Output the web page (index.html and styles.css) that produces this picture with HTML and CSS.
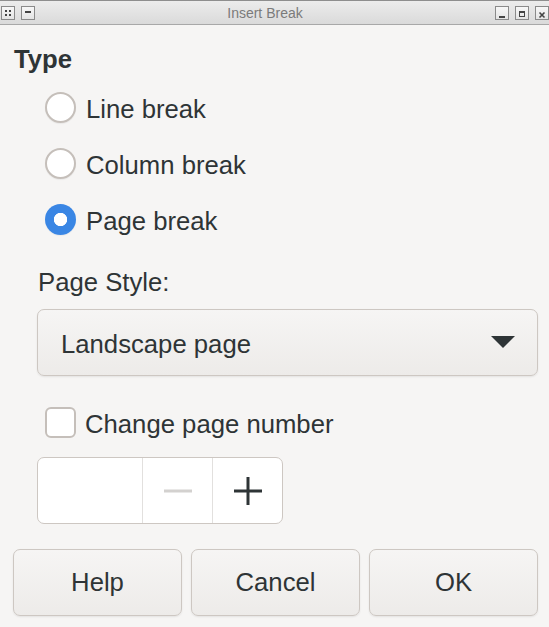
FILE: index.html
```html
<!DOCTYPE html>
<html>
<head>
<meta charset="utf-8">
<title>Insert Break</title>
<link rel="stylesheet" href="styles.css">
</head>
<body>
<div class="titlebar">
  <div class="tb-group">
    <span class="tb-btn"><svg width="12" height="12" viewBox="0 0 12 12"><rect x="3" y="3" width="2" height="2" fill="#444"/><rect x="7" y="3" width="2" height="2" fill="#444"/><rect x="3" y="7" width="2" height="2" fill="#444"/><rect x="7" y="7" width="2" height="2" fill="#444"/></svg></span>
    <span class="tb-btn"><svg width="12" height="12" viewBox="0 0 12 12"><rect x="3" y="4" width="6" height="2" fill="#444"/></svg></span>
  </div>
  <div class="title">Insert Break</div>
  <div class="tb-group">
    <span class="tb-btn"><svg width="12" height="12" viewBox="0 0 12 12"><rect x="3" y="9" width="6" height="2" fill="#444"/></svg></span>
    <span class="tb-btn"><svg width="12" height="12" viewBox="0 0 12 12"><rect x="3.5" y="4.5" width="5" height="5" fill="none" stroke="#444" stroke-width="1"/><rect x="3" y="4" width="6" height="2" fill="#444"/></svg></span>
    <span class="tb-btn"><svg width="12" height="12" viewBox="0 0 12 12"><path d="M3.5 5.5 L8.5 10.5 M8.5 5.5 L3.5 10.5" stroke="#444" stroke-width="1.6"/></svg></span>
  </div>
</div>

<div class="content">
  <div class="heading">Type</div>
  <div class="radios">
    <div class="radio-row"><span class="radio"></span><span class="label">Line break</span></div>
    <div class="radio-row"><span class="radio"></span><span class="label">Column break</span></div>
    <div class="radio-row"><span class="radio checked"></span><span class="label">Page break</span></div>
  </div>

  <div class="field-label">Page Style:</div>
  <div class="dropdown">
    <span class="dd-text">Landscape page</span>
    <svg class="dd-arrow" width="24" height="12" viewBox="0 0 24 12"><polygon points="0,0 24,0 12,12" fill="#2e3436"/></svg>
  </div>

  <div class="check-row"><span class="checkbox"></span><span class="label">Change page number</span></div>

  <div class="spin">
    <div class="spin-entry"></div>
    <div class="spin-btn"><svg width="28" height="28" viewBox="0 0 28 28"><rect x="0" y="12.5" width="28" height="3" fill="#d3d1cf"/></svg></div>
    <div class="spin-btn"><svg width="28" height="28" viewBox="0 0 28 28"><rect x="0" y="12.5" width="28" height="3" fill="#2e3436"/><rect x="12.5" y="0" width="3" height="28" fill="#2e3436"/></svg></div>
  </div>

  <div class="actions">
    <button class="btn">Help</button>
    <button class="btn">Cancel</button>
    <button class="btn">OK</button>
  </div>
</div>
</body>
</html>
```

FILE: styles.css
```css
* { box-sizing: border-box; }

body {
  margin: 0;
  width: 549px;
  height: 627px;
  overflow: hidden;
  background: #f6f5f4;
  font-family: "Liberation Sans", Arial, sans-serif;
  color: #2e3436;
}

.titlebar {
  display: flex;
  align-items: center;
  height: 25px;
  border-top: 1px solid #8e8e8e;
  border-bottom: 1px solid #a8a8a8;
  background: linear-gradient(#ececec, #dadada);
}

.tb-group {
  display: flex;
  gap: 6px;
}

.tb-group:first-child {
  padding-left: 1px;
}

.tb-btn {
  display: flex;
  width: 14px;
  height: 14px;
  border: 1px solid #8a8a8a;
  background: linear-gradient(#f7f7f7, #e4e4e4);
}

.title {
  flex: 1;
  text-align: center;
  font-size: 14px;
  color: #7b7b7b;
}

.content {
  padding-top: 19px;
  font-size: 25.7px;
  line-height: 30px;
}

.heading {
  margin-left: 14px;
  font-weight: bold;
}

.radios {
  margin-top: 5px;
}

.radio-row {
  display: flex;
  align-items: center;
  gap: 10px;
  height: 56px;
  padding-left: 45px;
}

.label {
  padding-top: 3px;
}

.radio {
  flex-shrink: 0;
  width: 31px;
  height: 31px;
  border-radius: 50%;
  border: 2px solid #c5bfba;
  background: #ffffff;
  box-shadow: 0 1px 1px rgba(0, 0, 0, 0.05);
}

.radio.checked {
  border: none;
  background: radial-gradient(circle, #ffffff 0, #ffffff 6.3px, #3a86e4 7px);
}

.field-label {
  margin: 20px 0 0 38px;
}

.dropdown {
  display: flex;
  align-items: center;
  justify-content: space-between;
  margin: 12px 0 0 37px;
  width: 501px;
  height: 67px;
  padding: 3px 22px 0 23px;
  border: 1px solid #cdc7c2;
  border-radius: 7px;
  background: linear-gradient(#f6f5f4, #edebe9);
  box-shadow: 0 1px 2px rgba(0, 0, 0, 0.08);
}

.dd-arrow {
  margin-top: -4px;
}

.check-row {
  display: flex;
  align-items: center;
  gap: 9px;
  height: 31px;
  margin: 31px 0 0 45px;
}

.checkbox {
  flex-shrink: 0;
  width: 31px;
  height: 31px;
  border: 2px solid #c5bfba;
  border-radius: 6px;
  background: #ffffff;
}

.spin {
  display: flex;
  margin: 19px 0 0 37px;
  width: 246px;
  height: 67px;
  border: 1px solid #cdc7c2;
  border-radius: 7px;
  background: #ffffff;
  overflow: hidden;
}

.spin-entry {
  width: 104px;
}

.spin-btn {
  display: flex;
  align-items: center;
  justify-content: center;
  width: 70px;
  border-left: 1px solid #e2e0de;
}

.actions {
  display: flex;
  gap: 9px;
  margin-top: 25px;
  padding: 0 11px 0 13px;
}

.btn {
  flex: 1;
  height: 67px;
  font-family: "Liberation Sans", Arial, sans-serif;
  font-size: 25.7px;
  color: #2e3436;
  border: 1px solid #cdc7c2;
  border-radius: 7px;
  background: linear-gradient(#f6f5f4, #edebe9);
  box-shadow: 0 1px 2px rgba(0, 0, 0, 0.08);
  padding: 0;
}
```
